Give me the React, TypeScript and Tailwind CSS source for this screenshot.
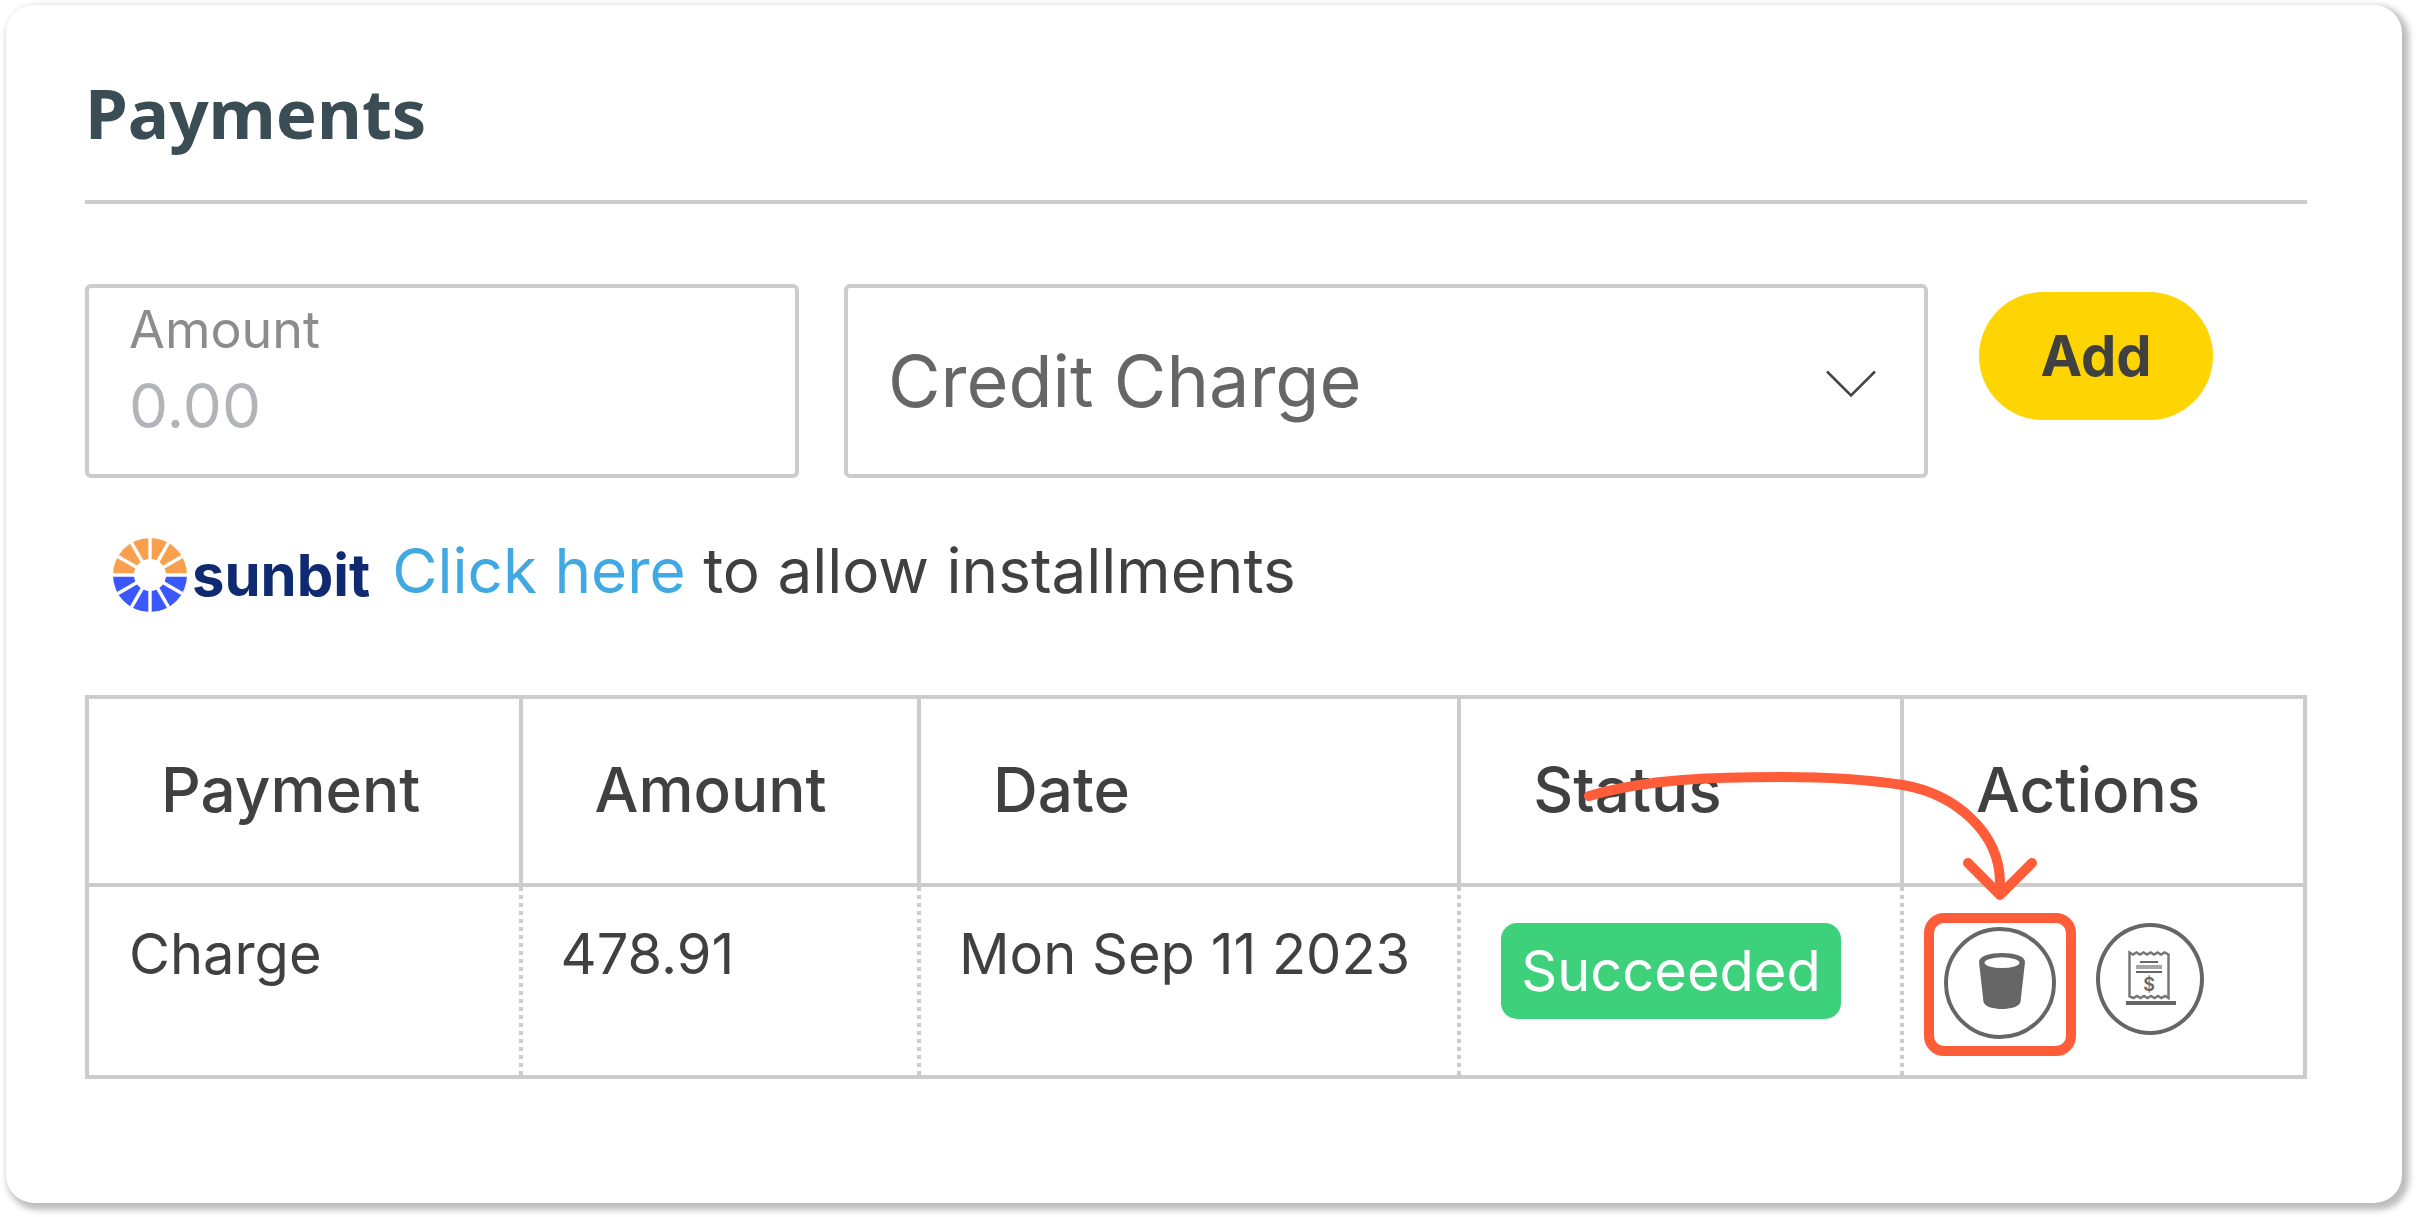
const columns = [
  { label: "Payment", width: "w-[19.4%]" },
  { label: "Amount", width: "w-[18%]" },
  { label: "Date", width: "w-[24.4%]" },
  { label: "Status", width: "w-[20%]" },
  { label: "Actions", width: "w-[18.2%]" },
];

const payments = [
  { type: "Charge", amount: "478.91", date: "Mon Sep 11 2023", status: "Succeeded" },
];

const dottedLeft =
  "bg-[linear-gradient(#cccccc_50%,transparent_50%)] bg-[length:4px_8px] bg-repeat-y bg-left-top";

function SunbitLogo() {
  return (
    <span className="flex items-center gap-[5px] pt-1">
      <svg viewBox="0 0 74 74" className="h-[74px] w-[74px]" aria-hidden="true">
        <path d="M0 37 A37 37 0 0 1 74 37 H53 A16 16 0 0 0 21 37 Z" fill="#f9a04f" />
        <path d="M0 37 A37 37 0 0 0 74 37 H53 A16 16 0 0 1 21 37 Z" fill="#3b58ff" />
        {[0, 30, 60, 90, 120, 150].map((deg) => (
          <path key={deg} d="M0 37 H74" stroke="#fff" strokeWidth="3.4" transform={`rotate(${deg} 37 37)`} />
        ))}
      </svg>
      <span className="text-[58px] leading-none font-bold text-[#102a72]">sunbit</span>
    </span>
  );
}

function TrashIcon() {
  return (
    <svg viewBox="0 0 104 104" className="h-full w-full" aria-hidden="true">
      <path
        d="M31 31 C31 25 42 22 54 22 S77 25 77 31 L72.500 71 C71 76 62 78 54 78 S37 76 35.500 71 Z"
        fill="#666"
      />
      <ellipse cx="54" cy="31.700" rx="17.500" ry="5.400" fill="#fff" />
    </svg>
  );
}

function ReceiptIcon() {
  return (
    <svg viewBox="0 0 100 104" className="h-full w-full" aria-hidden="true">
      <path
        d="M29.500 25.500 L33 27.500 L36.500 25.500 L40 27.500 L43.500 25.500 L47 27.500 L50.500 25.500 L54 27.500 L57.500 25.500 L61 27.500 L64.500 25.500 L68.500 27.500 V71 L65 69 L61.500 71 L58 69 L54.500 71 L51 69 L47.500 71 L44 69 L40.500 71 L37 69 L33.500 71 L29.500 69.500 Z"
        fill="none"
        stroke="#777"
        strokeWidth="2.500"
      />
      <path d="M40 35 H58 M36 45 H62" stroke="#666" strokeWidth="2" />
      <path d="M36 40 H62" stroke="#a6a6a6" strokeWidth="4" />
      <path d="M26 76 H76" stroke="#666" strokeWidth="4" />
      <text x="49" y="64" textAnchor="middle" fontSize="18" fontWeight="600" fill="#666">
        $
      </text>
    </svg>
  );
}

// Callout that leads from the status column down to the delete button
function DeleteCallout() {
  return (
    <>
      <svg
        viewBox="0 0 460 132"
        className="pointer-events-none absolute -top-[157px] -left-[364px] h-[132px] w-[460px] max-w-none"
        aria-hidden="true"
      >
        <path
          d="M9 26 C70 8 140 7 205 7 C250 7 290 10 323 15 C375 24 420 62 420 113 V121 M388 93 L420 125 L452 93"
          fill="none"
          stroke="#ff5c39"
          strokeWidth="10"
          strokeLinecap="round"
          strokeLinejoin="round"
        />
      </svg>
      <span className="pointer-events-none absolute -top-[14px] -bottom-[17px] -inset-x-5 rounded-[20px] border-[10px] border-[#ff5c39]" />
    </>
  );
}

export default function App() {
  return (
    <div className="flex min-h-screen bg-white pt-[5px] pr-[14px] pb-[14px] pl-[6px] font-['Inter',sans-serif] text-[#404040]">
      <main className="flex-1 rounded-[28px] bg-white pt-[67px] pr-[95px] pb-[124px] pl-[79px] shadow-[4px_4px_6px_3px_#bdbdbd]">
        <h1 className="border-b-4 border-[#cccccc] pb-12 font-['Noto_Sans',sans-serif] text-[69px] leading-[80px] font-bold text-[#3a4d54]">
          Payments
        </h1>

        <form
          className="mt-20 grid grid-cols-[714fr_1084fr_240px] items-start gap-[45px] pr-[94px]"
          onSubmit={(e) => e.preventDefault()}
        >
          <div className="flex h-[194px] flex-col gap-3 rounded-md border-4 border-[#cccccc] px-10 pt-[14px]">
            <label htmlFor="amount" className="text-[52px] leading-[56px] text-[#8c8c8c]">
              Amount
            </label>
            <input
              id="amount"
              type="text"
              inputMode="decimal"
              placeholder="0.00"
              className="w-full text-[62px] leading-[72px] outline-none placeholder:text-[#b1b5b9]"
            />
          </div>

          <div className="relative h-[194px]">
            <select
              aria-label="Payment method"
              className="h-full w-full appearance-none rounded-md border-4 border-[#cccccc] bg-white px-10 text-[72px] text-[#666666] outline-none"
            >
              <option>Credit Charge</option>
            </select>
            <svg
              viewBox="0 0 50 28"
              className="pointer-events-none absolute top-[86px] right-[52px] h-7 w-[50px]"
              fill="none"
              stroke="#444"
              strokeWidth="2.500"
              aria-hidden="true"
            >
              <path d="M1 1.500 L25 25.500 L49 1.500" />
            </svg>
          </div>

          <button
            type="submit"
            className="mt-2 h-32 w-[234px] justify-self-end rounded-full bg-[#ffd403] text-[56px] font-bold text-[#404040]"
          >
            Add
          </button>
        </form>

        <div className="mt-14 flex items-start gap-[22px] pl-7">
          <SunbitLogo />
          <p className="text-[62px] leading-[74px]">
            <a href="#installments" className="text-[#42a8e2]">
              Click here
            </a>{" "}
            to allow installments
          </p>
        </div>

        <table className="mt-[83px] w-full table-fixed border-separate border-spacing-0 border-4 border-[#cccccc] text-left">
          <thead>
            <tr className="h-[188px]">
              {columns.map((col) => (
                <th
                  key={col.label}
                  scope="col"
                  className={`${col.width} border-b-4 border-l-4 border-[#cccccc] pb-1 pl-[72px] text-[62px] font-medium first:border-l-0`}
                >
                  {col.label}
                </th>
              ))}
            </tr>
          </thead>
          <tbody>
            {payments.map((p) => (
              <tr key={p.date} className="h-[188px] align-top text-[56px] leading-[70px]">
                <td className="pt-8 pl-10">{p.type}</td>
                <td className={`${dottedLeft} pt-8 pl-[42px]`}>{p.amount}</td>
                <td className={`${dottedLeft} pt-8 pl-[42px] whitespace-nowrap`}>{p.date}</td>
                <td className={`${dottedLeft} pt-9 pl-11`}>
                  <span className="inline-flex h-24 items-center rounded-2xl bg-[#3dd17c] px-5 text-white">
                    {p.status}
                  </span>
                </td>
                <td className={`${dottedLeft} pt-9 pl-11`}>
                  <div className="flex items-start gap-10">
                    <div className="relative mt-1">
                      <button
                        type="button"
                        aria-label="Delete payment"
                        className="block h-28 w-28 rounded-full border-4 border-[#666666]"
                      >
                        <TrashIcon />
                      </button>
                      <DeleteCallout />
                    </div>
                    <button
                      type="button"
                      aria-label="View receipt"
                      className="h-28 w-[108px] rounded-[50%] border-4 border-[#666666]"
                    >
                      <ReceiptIcon />
                    </button>
                  </div>
                </td>
              </tr>
            ))}
          </tbody>
        </table>
      </main>
    </div>
  );
}
